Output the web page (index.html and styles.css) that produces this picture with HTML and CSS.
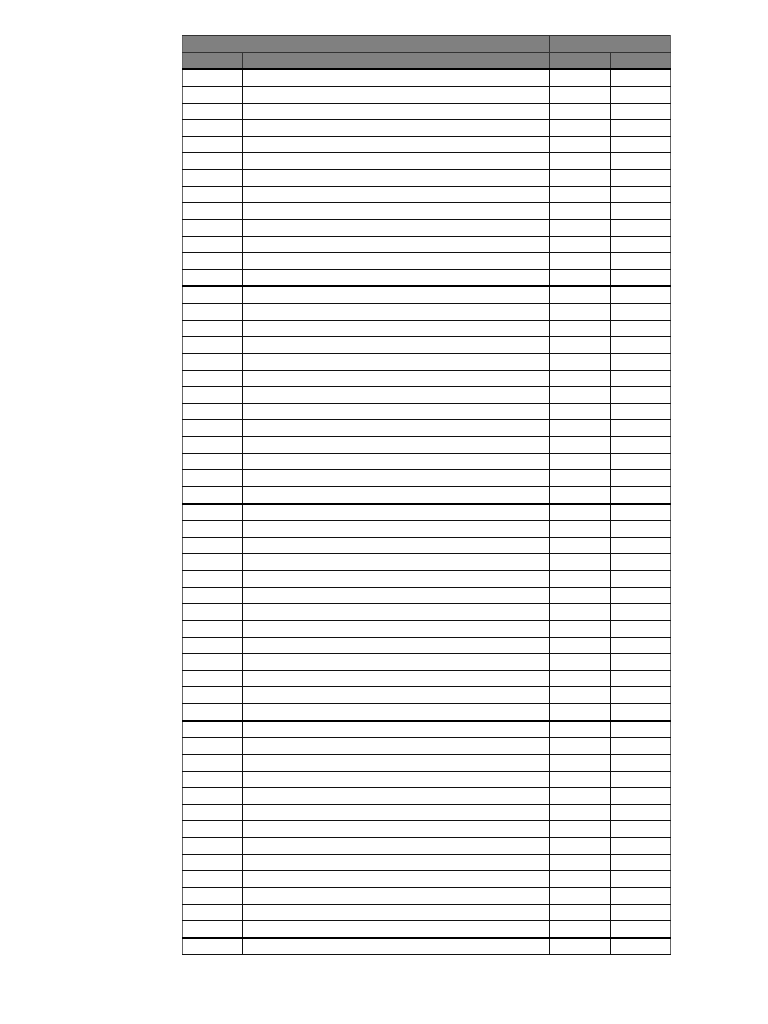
FILE: index.html
```html
<!DOCTYPE html>
<html lang="en">
<head>
<meta charset="utf-8">
<title>Sheet</title>
<link rel="stylesheet" href="styles.css">
</head>
<body>
<div class="page">
<table class="sheet">
<colgroup><col class="c1"><col class="c2"><col class="c3"><col class="c4"></colgroup>
<thead>
<tr><th colspan="2"></th><th colspan="2"></th></tr>
<tr><th></th><th></th><th></th><th></th></tr>
</thead>
<tbody>
<tr><td></td><td></td><td></td><td></td></tr>
<tr><td></td><td></td><td></td><td></td></tr>
<tr><td></td><td></td><td></td><td></td></tr>
<tr><td></td><td></td><td></td><td></td></tr>
<tr><td></td><td></td><td></td><td></td></tr>
<tr><td></td><td></td><td></td><td></td></tr>
<tr><td></td><td></td><td></td><td></td></tr>
<tr><td></td><td></td><td></td><td></td></tr>
<tr><td></td><td></td><td></td><td></td></tr>
<tr><td></td><td></td><td></td><td></td></tr>
<tr><td></td><td></td><td></td><td></td></tr>
<tr><td></td><td></td><td></td><td></td></tr>
<tr><td></td><td></td><td></td><td></td></tr>
</tbody>
<tbody>
<tr><td></td><td></td><td></td><td></td></tr>
<tr><td></td><td></td><td></td><td></td></tr>
<tr><td></td><td></td><td></td><td></td></tr>
<tr><td></td><td></td><td></td><td></td></tr>
<tr><td></td><td></td><td></td><td></td></tr>
<tr><td></td><td></td><td></td><td></td></tr>
<tr><td></td><td></td><td></td><td></td></tr>
<tr><td></td><td></td><td></td><td></td></tr>
<tr><td></td><td></td><td></td><td></td></tr>
<tr><td></td><td></td><td></td><td></td></tr>
<tr><td></td><td></td><td></td><td></td></tr>
<tr><td></td><td></td><td></td><td></td></tr>
<tr><td></td><td></td><td></td><td></td></tr>
</tbody>
<tbody>
<tr><td></td><td></td><td></td><td></td></tr>
<tr><td></td><td></td><td></td><td></td></tr>
<tr><td></td><td></td><td></td><td></td></tr>
<tr><td></td><td></td><td></td><td></td></tr>
<tr><td></td><td></td><td></td><td></td></tr>
<tr><td></td><td></td><td></td><td></td></tr>
<tr><td></td><td></td><td></td><td></td></tr>
<tr><td></td><td></td><td></td><td></td></tr>
<tr><td></td><td></td><td></td><td></td></tr>
<tr><td></td><td></td><td></td><td></td></tr>
<tr><td></td><td></td><td></td><td></td></tr>
<tr><td></td><td></td><td></td><td></td></tr>
<tr><td></td><td></td><td></td><td></td></tr>
</tbody>
<tbody>
<tr><td></td><td></td><td></td><td></td></tr>
<tr><td></td><td></td><td></td><td></td></tr>
<tr><td></td><td></td><td></td><td></td></tr>
<tr><td></td><td></td><td></td><td></td></tr>
<tr><td></td><td></td><td></td><td></td></tr>
<tr><td></td><td></td><td></td><td></td></tr>
<tr><td></td><td></td><td></td><td></td></tr>
<tr><td></td><td></td><td></td><td></td></tr>
<tr><td></td><td></td><td></td><td></td></tr>
<tr><td></td><td></td><td></td><td></td></tr>
<tr><td></td><td></td><td></td><td></td></tr>
<tr><td></td><td></td><td></td><td></td></tr>
<tr><td></td><td></td><td></td><td></td></tr>
</tbody>
<tbody>
<tr><td></td><td></td><td></td><td></td></tr>
</tbody>
</table>
</div>
</body>
</html>
```

FILE: styles.css
```css
html, body {
  margin: 0;
  padding: 0;
  background: #ffffff;
  font-family: "Liberation Sans", Arial, sans-serif;
}

.page {
  padding: 35px 0 0 182px;
}

.sheet {
  border-collapse: collapse;
  table-layout: fixed;
  width: 488px;
  border: 1px solid #555555;
}

.c1 { width: 60px; }
.c2 { width: 307px; }
.c3 { width: 61px; }
.c4 { width: 60px; }

.sheet th,
.sheet td {
  padding: 0;
  height: 15.63px;
  border: 1px solid #111111;
}

.sheet th {
  background: #808080;
  border-color: #333333;
}

.sheet thead tr:last-child th {
  border-bottom: 2px solid #000000;
}

.sheet tbody + tbody tr:first-child td {
  border-top: 2px solid #000000;
}

.sheet td:first-child,
.sheet th:first-child {
  border-left-color: #666666;
}

.sheet td:last-child,
.sheet th:last-child {
  border-right-color: #666666;
}
```
